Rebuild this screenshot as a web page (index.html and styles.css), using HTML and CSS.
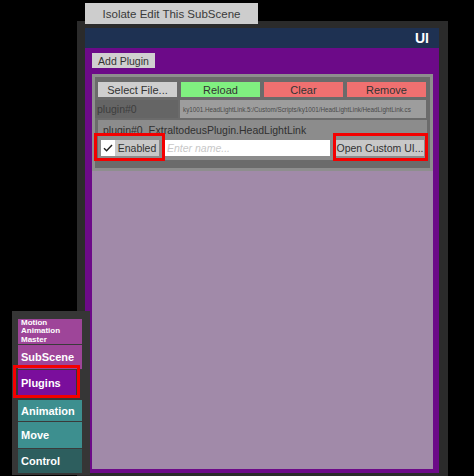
FILE: index.html
```html
<!DOCTYPE html>
<html>
<head>
<meta charset="utf-8">
<link rel="stylesheet" href="styles.css">
</head>
<body>
<div class="stage">
  <div class="window">
    <div class="header"><span class="title">UI</span></div>
    <div class="body">
      <div class="add-btn">Add Plugin</div>
      <div class="content">
        <div class="plugin-panel">
          <div class="btn-row">
            <div class="btn gray">Select File...</div>
            <div class="btn green">Reload</div>
            <div class="btn red">Clear</div>
            <div class="btn red">Remove</div>
          </div>
          <div class="path-row">
            <div class="path-label">plugin#0</div>
            <div class="path-field">ky1001.HeadLightLink.5:/Custom/Scripts/ky1001/HeadLightLink/HeadLightLink.cs</div>
          </div>
          <div class="sub-panel">
            <div class="sub-title">plugin#0&nbsp;&nbsp;ExtraltodeusPlugin.HeadLightLink</div>
            <div class="ctrl-row">
              <div class="toggle">
                <div class="check"><svg width="10" height="8" viewBox="0 0 10 8"><path d="M1 4.2 L3.6 6.8 L9 1" fill="none" stroke="#222" stroke-width="1.4"/></svg></div>
                <div class="toggle-label">Enabled</div>
              </div>
              <div class="name-input">Enter name...</div>
              <div class="open-btn">Open Custom UI...</div>
            </div>
          </div>
          <div class="hl hl-enabled"></div>
          <div class="hl hl-open"></div>
        </div>
      </div>
    </div>
  </div>
  <div class="isolate">Isolate Edit This SubScene</div>
  <div class="sidebar">
    <div class="tab magenta small">Motion<br>Animation<br>Master</div>
    <div class="tab magenta subscene">SubScene</div>
    <div class="tab plugins">Plugins</div>
    <div class="tab teal anim">Animation</div>
    <div class="tab teal move">Move</div>
    <div class="tab darkteal control">Control</div>
    <div class="hl hl-plugins"></div>
  </div>
</div>
</body>
</html>
```

FILE: styles.css
```css
html, body {
  margin: 0;
  padding: 0;
  background: #000;
}
body {
  font-family: "Liberation Sans", Arial, sans-serif;
}
.stage {
  position: relative;
  width: 474px;
  height: 476px;
  overflow: hidden;
  background: #000;
}
.isolate {
  position: absolute;
  left: 85px;
  top: 3px;
  width: 173px;
  height: 21px;
  background: #cdcdcd;
  color: #3a3a3a;
  font-size: 11.5px;
  display: flex;
  align-items: center;
  justify-content: center;
}
.window {
  position: absolute;
  left: 77px;
  top: 21px;
  width: 354px;
  height: 455px;
  padding: 7px 9px 0 8px;
  background: #2b2b2b;
}
.header {
  height: 20px;
  background: #1e3152;
  display: flex;
  align-items: center;
  justify-content: flex-end;
  padding-right: 10px;
}
.title {
  color: #fff;
  font-weight: bold;
  font-size: 14px;
}
.body {
  height: 416px;
  background: #6c0a88;
  padding: 5px 6px 4px 7px;
}
.add-btn {
  width: 63px;
  height: 15px;
  background: #d0d0d0;
  color: #333;
  font-size: 10.5px;
  display: flex;
  align-items: center;
  justify-content: center;
}
.content {
  margin-top: 6px;
  height: 395px;
  background: #a18aa9;
}
.plugin-panel {
  position: relative;
  height: 86px;
  border: 3px solid #8e8e8e;
  background: #6b6b6b;
  padding: 5px 3px 0 0;
}
.btn-row {
  display: grid;
  grid-template-columns: repeat(4, 1fr);
  column-gap: 4px;
  margin-left: 3px;
  margin-right: 1px;
  height: 15px;
}
.btn {
  display: flex;
  align-items: center;
  justify-content: center;
  font-size: 11px;
  color: #333;
}
.btn.gray { background: #cfcfcf; }
.btn.green { background: #80f080; }
.btn.red { background: #f07070; }
.path-row {
  display: flex;
  margin-top: 3px;
  margin-right: 1px;
  height: 18px;
}
.path-label {
  width: 83px;
  background: #656565;
  color: #3d3d3d;
  font-size: 10.5px;
  display: flex;
  align-items: center;
  padding-left: 2px;
  box-sizing: border-box;
}
.path-field {
  flex: 1;
  margin-left: 2px;
  background: #9d9d9d;
  color: #4a4a4a;
  font-size: 6.3px;
  display: flex;
  align-items: center;
  padding-left: 3px;
  white-space: nowrap;
  overflow: hidden;
}
.sub-panel {
  margin: 2px 0 0 3px;
  height: 40px;
  background: #8c8c8c;
  padding: 0 3px;
}
.sub-title {
  height: 20px;
  display: flex;
  align-items: center;
  padding-left: 2px;
  font-size: 10.5px;
  color: #303030;
}
.ctrl-row {
  display: flex;
  height: 16px;
}
.toggle {
  display: flex;
  width: 58px;
}
.check {
  width: 14px;
  background: #fff;
  display: flex;
  align-items: center;
  justify-content: center;
}
.toggle-label {
  flex: 1;
  background: #c8c8c8;
  color: #333;
  font-size: 10.5px;
  display: flex;
  align-items: center;
  justify-content: center;
}
.name-input {
  flex: 1;
  margin-left: 6px;
  background: #fff;
  color: #c8c8c8;
  font-style: italic;
  font-size: 10.5px;
  display: flex;
  align-items: center;
  padding-left: 2px;
}
.open-btn {
  width: 88px;
  margin-left: 6px;
  background: #c8c8c8;
  color: #333;
  font-size: 10.5px;
  display: flex;
  align-items: center;
  justify-content: center;
}
.hl {
  position: absolute;
  border: 3px solid #f40000;
  box-sizing: border-box;
}
.hl-enabled {
  left: -1px;
  top: 56px;
  width: 71px;
  height: 28px;
}
.hl-open {
  left: 238px;
  top: 56px;
  width: 95px;
  height: 28px;
}
.sidebar {
  position: absolute;
  left: 12px;
  top: 311px;
  width: 78px;
  height: 164px;
  background: #363636;
  padding: 8px 0 0 6px;
  box-sizing: border-box;
}
.tab {
  width: 64px;
  color: #fff;
  font-weight: bold;
  font-size: 11px;
  display: flex;
  align-items: center;
  padding-left: 3px;
  box-sizing: border-box;
  border-bottom: 1px solid #3a3a3a;
}
.tab.small {
  height: 26px;
  font-size: 8px;
  line-height: 8.3px;
}
.magenta { background: #9e4599; }
.subscene { height: 25px; }
.plugins {
  height: 26px;
  width: 58px;
  background: #7a0e9c;
  border-bottom: none;
}
.teal { background: #3d8f8f; }
.anim { height: 22px; margin-top: 4px; }
.move { height: 27px; }
.darkteal { background: #2d5e5e; }
.control { height: 24px; border-bottom: none; }
.hl-plugins {
  left: 1px;
  top: 54px;
  width: 67px;
  height: 33px;
}
```
